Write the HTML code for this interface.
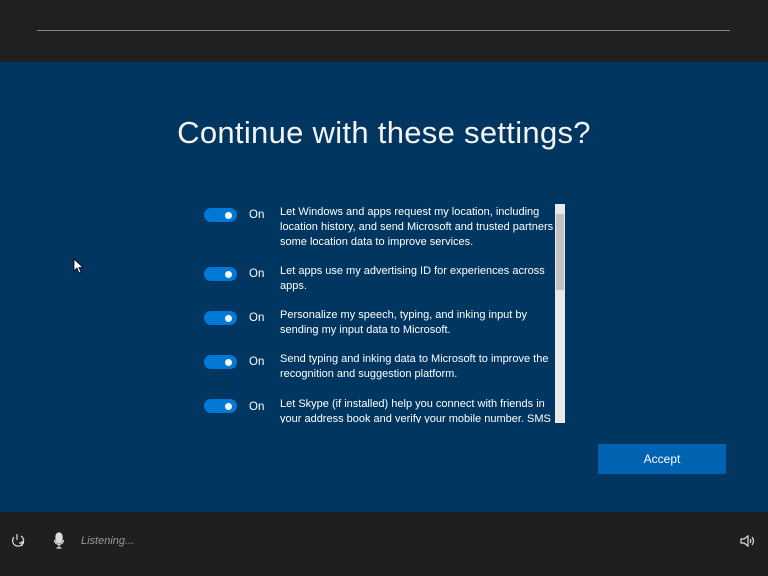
<!DOCTYPE html>
<html><head><style>
body{margin:0;width:768px;height:576px;overflow:hidden;background:#1f1f1f;font-family:"Segoe UI","Liberation Sans",sans-serif;position:relative}
.top{position:absolute;left:0;top:0;width:768px;height:62px;background:#202020}
.line{position:absolute;left:37px;top:30px;width:693px;height:1px;background:#8a8a8a}
.main{position:absolute;left:0;top:62px;width:768px;height:450px;background:#003660}
h1{position:absolute;top:115px;left:0;width:768px;text-align:center;margin:0;font-weight:300;font-size:31px;color:#f4f4f4;letter-spacing:0.3px}
.tg{position:absolute;left:204px;width:33px;height:14px;border-radius:7px;background:#0078d7}
.tg:after{content:"";position:absolute;right:5px;top:3.5px;width:7px;height:7px;border-radius:50%;background:#fff}
.on{position:absolute;left:249px;font-size:11.5px;color:#fff}
.box{position:absolute;left:280px;top:205px;width:275px;height:218px;overflow:hidden}
.t{position:absolute;left:0;width:290px;font-size:11px;line-height:15px;color:#fff;white-space:nowrap}
.sb{position:absolute;left:555px;top:204px;width:10px;height:219px;background:#e8e8e8}
.th{position:absolute;left:556px;top:214px;width:8px;height:76px;background:#c2c2c2}
.btn{position:absolute;left:598px;top:444px;width:128px;height:30px;background:#0063b1;color:#fff;font-size:12px;text-align:center;line-height:31px}
.ls{position:absolute;left:81px;top:535px;font-size:11px;font-style:italic;color:#9a9a9a}
</style></head><body>
<div class="top"><div class="line"></div></div>
<div class="main"></div>
<h1>Continue with these settings?</h1>
<div class="tg" style="top:208px"></div><div class="on" style="top:209px">On</div>
<div class="tg" style="top:267px"></div><div class="on" style="top:268px">On</div>
<div class="tg" style="top:311px"></div><div class="on" style="top:312px">On</div>
<div class="tg" style="top:355px"></div><div class="on" style="top:356px">On</div>
<div class="tg" style="top:399px"></div><div class="on" style="top:401px">On</div>
<div class="box">
<div class="t" style="top:0px">Let Windows and apps request my location, including<br>location history, and send Microsoft and trusted partners<br>some location data to improve services.</div>
<div class="t" style="top:59px">Let apps use my advertising ID for experiences across<br>apps.</div>
<div class="t" style="top:103px">Personalize my speech, typing, and inking input by<br>sending my input data to Microsoft.</div>
<div class="t" style="top:147px">Send typing and inking data to Microsoft to improve the<br>recognition and suggestion platform.</div>
<div class="t" style="top:192px">Let Skype (if installed) help you connect with friends in<br>your address book and verify your mobile number. SMS</div>
</div>
<div class="sb"></div><div class="th"></div>
<div class="btn">Accept</div>
<svg style="position:absolute;left:10px;top:533px" width="16" height="16" viewBox="0 0 16 16" fill="none" stroke="#ddd" stroke-width="1.2"><path d="M4 4 A5.5 5.5 0 1 0 11 3"/><path d="M7 1v6"/><path d="M9 10h5M12 8v5"/></svg>
<svg style="position:absolute;left:53px;top:532px" width="12" height="18" viewBox="0 0 12 18" fill="none" stroke="#ddd" stroke-width="1.2"><rect x="3" y="1" width="6" height="10" rx="3" fill="#ddd"/><path d="M1.5 8a4.5 4.5 0 0 0 9 0M6 13v3M3.5 16h5"/></svg>
<div class="ls">Listening...</div>
<svg style="position:absolute;left:740px;top:534px" width="16" height="14" viewBox="0 0 16 14" fill="none" stroke="#ddd" stroke-width="1.2"><path d="M1 5h3l4-3v10l-4-3H1z"/><path d="M10 5q1.5 2 0 4M12 3q3 4 0 8"/></svg>
<svg style="position:absolute;left:73px;top:258px" width="12" height="16" viewBox="0 0 12 16"><path d="M1 1v12l3-3 2 5 2-1-2-4.5h4z" fill="#fff" stroke="#000" stroke-width="0.8"/></svg>
</body></html>
